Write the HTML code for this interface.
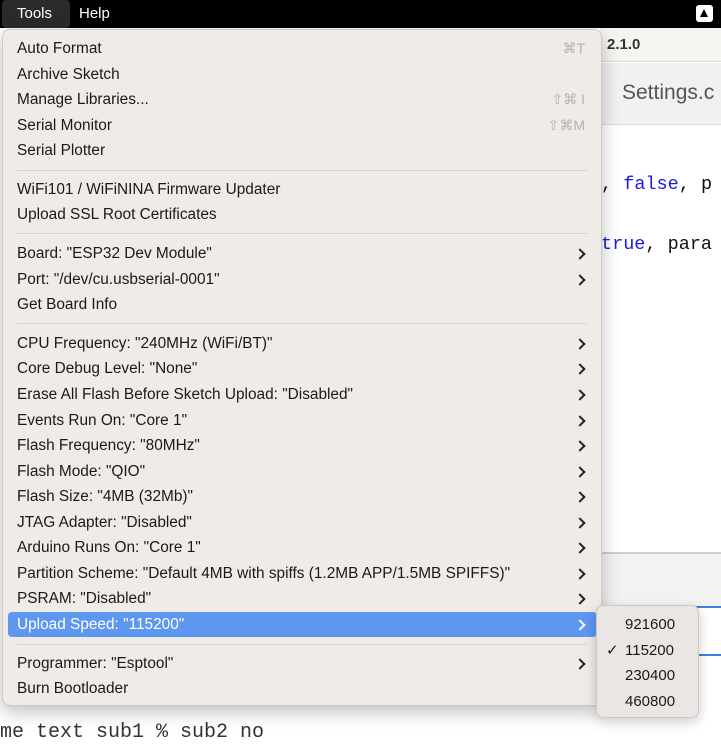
<!DOCTYPE html>
<html><head><meta charset="utf-8"><style>
*{margin:0;padding:0;box-sizing:border-box}
body{width:721px;height:750px;overflow:hidden;background:#fff;font-family:"Liberation Sans",sans-serif;position:relative}
.abs{position:absolute}
.bar{left:0;top:0;width:721px;height:28px;background:#000;color:#fff;font-size:15px}
.menu{left:2px;top:29px;width:600px;height:677px;background:#efebe7;border:1px solid #cfcac5;border-radius:8px;box-shadow:0 6px 18px rgba(0,0,0,.25)}
.it{position:absolute;left:14px;font-size:15.4px;color:#1a1a1a;line-height:18px;white-space:nowrap;margin-top:1px}
.ar{position:absolute;right:17px;width:8px;height:8px;border-right:2px solid #222;border-top:2px solid #222;transform:rotate(45deg)}
.sep{position:absolute;left:14px;right:14px;height:1px;background:#d6d1cc}
.sc{position:absolute;right:16px;font-size:14px;color:#b5b1ad}
.sub{left:596px;top:605px;width:103px;height:113px;background:#ebe6e4;border:1px solid #cdc8c5;border-radius:7px;box-shadow:0 4px 12px rgba(0,0,0,.2);font-size:15px;color:#1a1a1a}
.code{font-family:"Liberation Mono",monospace;font-size:18.5px;white-space:pre}
</style></head><body>
<div class="abs bar">
 <div class="abs" style="left:2px;top:0;width:68px;height:28px;background:#2a2a2a;border-radius:4px"></div>
 <div class="abs" style="left:17px;top:5px">Tools</div>
 <div class="abs" style="left:79px;top:5px">Help</div>
 <div class="abs" style="left:696px;top:5px;width:17px;height:17px;background:#fff;border-radius:3px"><div class="abs" style="left:4px;top:4px;width:0;height:0;border-left:4.5px solid transparent;border-right:4.5px solid transparent;border-bottom:8px solid #000"></div></div>
</div>
<div class="abs" style="left:600px;top:28px;width:121px;height:34px;background:#f6f4f1;border-bottom:1px solid #ddd"></div>
<div class="abs" style="left:607px;top:36px;font-size:15px;font-weight:bold;color:#333">2.1.0</div>
<div class="abs" style="left:600px;top:63px;width:121px;height:62px;background:#f1f1f1;border-bottom:1px solid #ddd"></div>
<div class="abs" style="left:622px;top:81px;font-size:21px;color:#555">Settings.c</div>
<div class="abs code" style="left:601px;top:174px;color:#111">, <span style="color:#1a1ae0">false</span>, p</div>
<div class="abs code" style="left:601px;top:234px;color:#111"><span style="color:#1a1ae0">true</span>, para</div>
<div class="abs" style="left:600px;top:552px;width:121px;height:2px;background:#ccc"></div>
<div class="abs" style="left:600px;top:554px;width:121px;height:52px;background:#f2f2f2"></div>
<div class="abs" style="left:600px;top:606px;width:121px;height:2px;background:#3b82e0"></div>
<div class="abs" style="left:600px;top:654px;width:121px;height:2px;background:#3b82e0"></div>
<div class="abs" style="left:0;top:721px;font-family:'Liberation Mono',monospace;font-size:20px;color:#333">me text sub1 % sub2 no</div>
<div class="abs menu">
 <div class="it" style="top:9px">Auto Format</div><div class="sc" style="top:10px">⌘T</div>
 <div class="it" style="top:35px">Archive Sketch</div>
 <div class="it" style="top:60px">Manage Libraries...</div><div class="sc" style="top:61px">⇧⌘ I</div>
 <div class="it" style="top:86px">Serial Monitor</div><div class="sc" style="top:87px">⇧⌘M</div>
 <div class="it" style="top:111px">Serial Plotter</div>
 <div class="sep" style="top:140px"></div>
 <div class="it" style="top:150px">WiFi101 / WiFiNINA Firmware Updater</div>
 <div class="it" style="top:175px">Upload SSL Root Certificates</div>
 <div class="sep" style="top:203px"></div>
 <div class="it" style="top:214px">Board: "ESP32 Dev Module"</div><div class="ar" style="top:220px"></div>
 <div class="it" style="top:240px">Port: "/dev/cu.usbserial-0001"</div><div class="ar" style="top:246px"></div>
 <div class="it" style="top:265px">Get Board Info</div>
 <div class="sep" style="top:293px"></div>
 <div class="it" style="top:304px">CPU Frequency: "240MHz (WiFi/BT)"</div><div class="ar" style="top:310px"></div>
 <div class="it" style="top:329px">Core Debug Level: "None"</div><div class="ar" style="top:335px"></div>
 <div class="it" style="top:355px">Erase All Flash Before Sketch Upload: "Disabled"</div><div class="ar" style="top:361px"></div>
 <div class="it" style="top:381px">Events Run On: "Core 1"</div><div class="ar" style="top:387px"></div>
 <div class="it" style="top:406px">Flash Frequency: "80MHz"</div><div class="ar" style="top:412px"></div>
 <div class="it" style="top:432px">Flash Mode: "QIO"</div><div class="ar" style="top:438px"></div>
 <div class="it" style="top:457px">Flash Size: "4MB (32Mb)"</div><div class="ar" style="top:463px"></div>
 <div class="it" style="top:483px">JTAG Adapter: "Disabled"</div><div class="ar" style="top:489px"></div>
 <div class="it" style="top:508px">Arduino Runs On: "Core 1"</div><div class="ar" style="top:514px"></div>
 <div class="it" style="top:534px">Partition Scheme: "Default 4MB with spiffs (1.2MB APP/1.5MB SPIFFS)"</div><div class="ar" style="top:540px"></div>
 <div class="it" style="top:559px">PSRAM: "Disabled"</div><div class="ar" style="top:565px"></div>
 <div class="abs" style="left:5px;top:582px;width:589px;height:25px;background:#5d97f0;border-radius:4px"></div>
 <div class="it" style="top:585px;color:#fff">Upload Speed: "115200"</div><div class="ar" style="top:591px;border-color:#fff"></div>
 <div class="sep" style="top:614px"></div>
 <div class="it" style="top:624px">Programmer: "Esptool"</div><div class="ar" style="top:630px"></div>
 <div class="it" style="top:649px">Burn Bootloader</div>
</div>
<div class="abs sub">
 <div class="abs" style="left:28px;top:10px">921600</div>
 <div class="abs" style="left:9px;top:35px">✓</div>
 <div class="abs" style="left:28px;top:36px">115200</div>
 <div class="abs" style="left:28px;top:61px">230400</div>
 <div class="abs" style="left:28px;top:87px">460800</div>
</div>
</body></html>
